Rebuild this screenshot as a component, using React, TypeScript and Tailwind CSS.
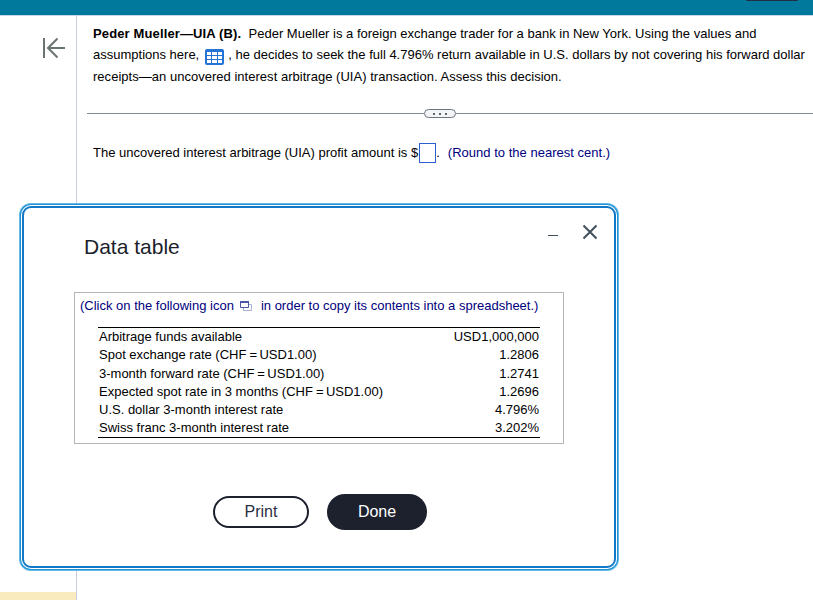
import { ReactNode } from "react";

/* ---------------------------------- Data ---------------------------------- */
const rows: { label: string; value: string; rate?: boolean }[] = [
  { label: "Arbitrage funds available", value: "USD1,000,000" },
  { label: "Spot exchange rate", value: "1.2806", rate: true },
  { label: "3-month forward rate", value: "1.2741", rate: true },
  { label: "Expected spot rate in 3 months", value: "1.2696", rate: true },
  { label: "U.S. dollar 3-month interest rate", value: "4.796%" },
  { label: "Swiss franc 3-month interest rate", value: "3.202%" },
];

/* ------------------------------ Main Function ----------------------------- */
export default function App() {
  return (
    <div className="relative flex h-[600px] w-[813px] flex-col overflow-hidden bg-white font-['Liberation_Sans',Arial,sans-serif] text-[13px] text-black">
      <header className="flex h-[15px] shrink-0 justify-end bg-[#00799c] pr-[15px]">
        <div className="h-px w-[52px] rounded-b-sm bg-[#1f2f3f]" />
      </header>
      <div className="flex grow border-t border-[#c7d6e8]">
        <Sidebar />
        <main className="flex grow flex-col">
          <Question />
          <Divider />
          <Answer />
        </main>
      </div>
      <DataTable />
    </div>
  );
}

/* --------------------------------- Sections ------------------------------- */
function Sidebar() {
  return (
    <aside className="flex w-[77px] shrink-0 flex-col justify-between border-r border-[#c7cbe0]">
      <button className="mt-[21px] ml-[42px] h-[22px] w-[24px]" aria-label="Collapse">
        <CollapseIcon />
      </button>
      <div className="h-2 bg-[#f9ebbd]" />
    </aside>
  );
}

function Question() {
  return (
    <section className="pt-[7px] pl-4 whitespace-pre">
      <Line className="h-[21px]">
        <b className="tracking-[0.13px]">Peder Mueller—UIA (B).</b>
        {"  Peder Mueller is a foreign exchange trader for a bank in New York. Using the values and"}
      </Line>
      <Line className="h-[22px]">
        assumptions here,
        <TableIcon />, he decides to seek the full 4.796% return available in U.S. dollars by not covering his forward dollar
      </Line>
      <Line className="h-[22px] tracking-[0.024px]">
        receipts—an uncovered interest arbitrage (UIA) transaction. Assess this decision.
      </Line>
    </section>
  );
}

function Divider() {
  return (
    <div className="mt-[20px] ml-[10px] flex h-[11px] items-center">
      <div className="h-px w-[337px] bg-[#84899a]" />
      <button className="flex h-[9px] w-8 items-center justify-center gap-[4px] rounded-full border border-[#6b7580] bg-[#f3f5f7]">
        <i className="size-[2px] bg-[#5d6670]" />
        <i className="size-[2px] bg-[#5d6670]" />
        <i className="size-[2px] bg-[#5d6670]" />
      </button>
      <div className="h-px grow bg-[#84899a]" />
    </div>
  );
}

function Answer() {
  return (
    <section className="mt-[23px] flex h-[22px] items-center pl-4 whitespace-pre">
      <span>The uncovered interest arbitrage (UIA) profit amount is $</span>
      <input className="ml-px h-[20px] w-[17px] border border-[#2b5fd0]" aria-label="Profit amount" />
      <span>.</span>
      <span className="ml-2 tracking-[0.02px] text-[#000080]">(Round to the nearest cent.)</span>
    </section>
  );
}

function DataTable() {
  return (
    <div
      role="dialog"
      className="absolute top-[206px] left-[22px] flex h-[362px] w-[594px] flex-col rounded-[9px] border-2 border-[#1279c9] bg-white shadow-[0_0_0_1px_#fff,0_0_0_2px_#1e93d6,0_0_0_3px_#63b8e4]"
    >
      <div className="flex h-[84px] justify-between pl-[60px]">
        <h1 className="pt-[26px] text-[21px] leading-[26px] text-[#1c1f2b]">Data table</h1>
        <div className="flex pt-[16px] pr-[16px]">
          <button className="mt-[11px] mr-[24px] h-px w-[10px] bg-[#41505c]" aria-label="Minimize" />
          <button className="size-[16px]" aria-label="Close">
            <CloseIcon />
          </button>
        </div>
      </div>
      <div className="ml-[50px] h-[152px] w-[490px] border border-[#b5b5b5] whitespace-pre">
        <p className="flex h-[34px] items-start pt-[5px] pl-[5px] leading-[16px] text-[#000080]">
          (Click on the following icon
          <CopyIcon />
          in order to copy its contents into a spreadsheet.)
        </p>
        <div className="ml-[23px] h-[111px] w-[442px] border-y border-black">
          {rows.map((row) => (
            <div key={row.label} className="flex h-[18.15px] items-center justify-between px-px">
              <span>
                {row.label}
                {row.rate && (
                  <>
                    {" (CHF"}
                    <span className="tracking-[-0.6px]">{" = "}</span>
                    USD1.00)
                  </>
                )}
              </span>
              <span>{row.value}</span>
            </div>
          ))}
        </div>
      </div>
      <div className="mt-[50px] ml-[189px] flex items-center gap-[18px] text-[16px]">
        <button className="h-8 w-24 rounded-full border-2 border-[#1c212d] text-[#2a2f3f]">Print</button>
        <button className="h-9 w-[100px] rounded-full bg-[#1c212d] text-white">Done</button>
      </div>
    </div>
  );
}

function Line({ children, className }: { children: ReactNode; className: string }) {
  return <p className={`flex items-center ${className}`}>{children}</p>;
}

/* ---------------------------------- Icons --------------------------------- */
function CollapseIcon() {
  return (
    <svg width="24" height="22" viewBox="0 0 24 22" fill="none" stroke="#6a7472" strokeWidth="2">
      <path d="M2 1v20M23 11H6M15.500 1.500L6 11l9.500 9.500" />
    </svg>
  );
}

function TableIcon() {
  return (
    <svg className="mt-[3px] mr-[4px] ml-[6px] shrink-0" width="19" height="16" viewBox="0 0 19 16">
      <rect width="19" height="16" rx="2" fill="#2474d8" />
      <g fill="#fff">
        <path d="M2 3h4v3H2zM7 3h5v3H7zM13 3h4v3h-4z" />
        <path d="M2 7h4v3H2zM7 7h5v3H7zM13 7h4v3h-4z" />
        <path d="M2 11h4v3H2zM7 11h5v3H7zM13 11h4v3h-4z" />
      </g>
    </svg>
  );
}

function CopyIcon() {
  return (
    <svg className="mt-[3px] mr-[9px] ml-[6px] shrink-0" width="12" height="10" viewBox="0 0 12 10" fill="none">
      <path d="M3.500 3.500h8v6h-8z" stroke="#a9aed6" />
      <path d="M.5.500h8v6h-8z" fill="#fff" stroke="#4d57a5" />
      <path d="M0 0h9v2H0z" fill="#4d57a5" />
    </svg>
  );
}

function CloseIcon() {
  return (
    <svg width="16" height="16" viewBox="0 0 16 16" stroke="#41505c" strokeWidth="2">
      <path d="M1.500 1.500l13 13M14.500 1.500l-13 13" />
    </svg>
  );
}
